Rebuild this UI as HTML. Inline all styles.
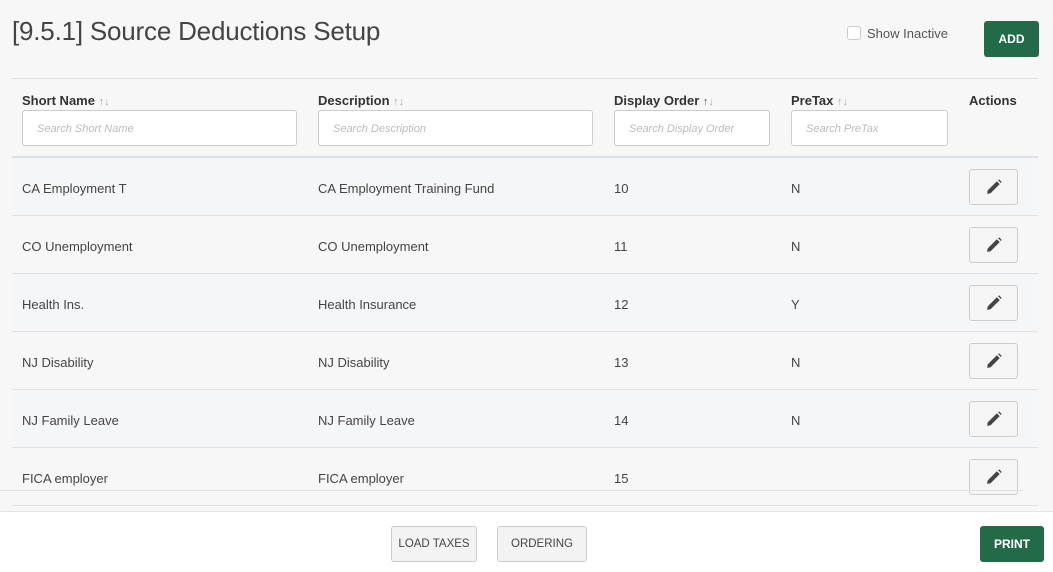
<!DOCTYPE html>
<html><head><meta charset="utf-8"><style>
*{box-sizing:border-box;margin:0;padding:0}
body{width:1053px;height:572px;overflow:hidden;background:#f7f7f7;font-family:"Liberation Sans",sans-serif;color:#333;position:relative}
.abs{position:absolute}
h1{position:absolute;left:12px;top:16px;font-size:26px;font-weight:normal;color:#444;letter-spacing:-0.2px}
.btn-g{position:absolute;background:#236b48;color:#fff;font-weight:bold;font-size:12px;border-radius:3px;display:flex;align-items:center;justify-content:center}
.btn-l{position:absolute;background:#f3f3f3;border:1px solid #ccc;border-radius:3px;color:#444;font-size:11.5px;display:flex;align-items:center;justify-content:center}
.th{position:absolute;top:93px;font-size:13px;font-weight:bold;color:#333}
.th span{color:#aaa;font-weight:normal;font-size:11px}
.in{position:absolute;top:110px;height:36px;background:#fff;border:1px solid #ccc;border-radius:3px;font-size:11px;font-style:italic;color:#bbb;padding:12px 0 0 14px}
.row{position:absolute;left:12px;width:1026px;height:58px;border-bottom:1px solid #dfe1e6}
.c{position:absolute;top:23px;font-size:13px;color:#444}
.ed{position:absolute;left:957px;top:11px;width:49px;height:36px;border:1px solid #ccc;border-radius:3px;background:#f5f5f5;display:flex;align-items:center;justify-content:center}
</style></head><body>
<h1>[9.5.1] Source Deductions Setup</h1>
<div class="abs" style="left:847px;top:26px;width:14px;height:14px;border:1px solid #ccc;border-radius:3px;background:#fff"></div>
<div class="abs" style="left:867px;top:26px;font-size:13px;color:#555">Show Inactive</div>
<div class="btn-g" style="left:984px;top:21px;width:55px;height:36px">ADD</div>
<div class="abs" style="left:12px;top:78px;width:1026px;height:1px;background:#dde0e4"></div>
<div class="th" style="left:22px">Short Name <span>↑↓</span></div>
<div class="th" style="left:318px">Description <span>↑↓</span></div>
<div class="th" style="left:614px">Display Order <span style="color:#555">↑</span><span>↓</span></div>
<div class="th" style="left:791px">PreTax <span>↑↓</span></div>
<div class="th" style="left:969px">Actions</div>
<div class="in" style="left:22px;width:275px">Search Short Name</div>
<div class="in" style="left:318px;width:275px">Search Description</div>
<div class="in" style="left:614px;width:156px">Search Display Order</div>
<div class="in" style="left:791px;width:157px">Search PreTax</div>
<div class="abs" style="left:12px;top:156px;width:1026px;height:2px;background:#dde0e4"></div>

<div class="row" style="top:158px;background:#f5f6f8"><div class="c" style="left:10px">CA Employment T</div><div class="c" style="left:306px">CA Employment Training Fund</div><div class="c" style="left:602px">10</div><div class="c" style="left:779px">N</div><div class="ed"><svg width="16" height="16" viewBox="0 0 14 14"><path d="M1 13 L1.5 10 L9.5 2 L12 4.5 L4 12.5 Z M10.5 1 L11.5 0.3 L13.7 2.5 L13 3.5 Z" fill="#444"/></svg></div></div>
<div class="row" style="top:216px"><div class="c" style="left:10px">CO Unemployment</div><div class="c" style="left:306px">CO Unemployment</div><div class="c" style="left:602px">11</div><div class="c" style="left:779px">N</div><div class="ed"><svg width="16" height="16" viewBox="0 0 14 14"><path d="M1 13 L1.5 10 L9.5 2 L12 4.5 L4 12.5 Z M10.5 1 L11.5 0.3 L13.7 2.5 L13 3.5 Z" fill="#444"/></svg></div></div>
<div class="row" style="top:274px;background:#f5f6f8"><div class="c" style="left:10px">Health Ins.</div><div class="c" style="left:306px">Health Insurance</div><div class="c" style="left:602px">12</div><div class="c" style="left:779px">Y</div><div class="ed"><svg width="16" height="16" viewBox="0 0 14 14"><path d="M1 13 L1.5 10 L9.5 2 L12 4.5 L4 12.5 Z M10.5 1 L11.5 0.3 L13.7 2.5 L13 3.5 Z" fill="#444"/></svg></div></div>
<div class="row" style="top:332px"><div class="c" style="left:10px">NJ Disability</div><div class="c" style="left:306px">NJ Disability</div><div class="c" style="left:602px">13</div><div class="c" style="left:779px">N</div><div class="ed"><svg width="16" height="16" viewBox="0 0 14 14"><path d="M1 13 L1.5 10 L9.5 2 L12 4.5 L4 12.5 Z M10.5 1 L11.5 0.3 L13.7 2.5 L13 3.5 Z" fill="#444"/></svg></div></div>
<div class="row" style="top:390px;background:#f5f6f8"><div class="c" style="left:10px">NJ Family Leave</div><div class="c" style="left:306px">NJ Family Leave</div><div class="c" style="left:602px">14</div><div class="c" style="left:779px">N</div><div class="ed"><svg width="16" height="16" viewBox="0 0 14 14"><path d="M1 13 L1.5 10 L9.5 2 L12 4.5 L4 12.5 Z M10.5 1 L11.5 0.3 L13.7 2.5 L13 3.5 Z" fill="#444"/></svg></div></div>
<div class="row" style="top:448px"><div class="c" style="left:10px">FICA employer</div><div class="c" style="left:306px">FICA employer</div><div class="c" style="left:602px">15</div><div class="ed"><svg width="16" height="16" viewBox="0 0 14 14"><path d="M1 13 L1.5 10 L9.5 2 L12 4.5 L4 12.5 Z M10.5 1 L11.5 0.3 L13.7 2.5 L13 3.5 Z" fill="#444"/></svg></div></div>
<div class="abs" style="left:0;top:490px;width:1023px;height:1px;background:#dde0e4"></div>

<div class="abs" style="left:0;top:511px;width:1053px;height:61px;background:#fff;border-top:1px solid #e3e3e3"></div>
<div class="btn-l" style="left:391px;top:526px;width:86px;height:36px">LOAD TAXES</div>
<div class="btn-l" style="left:497px;top:526px;width:90px;height:36px">ORDERING</div>
<div class="btn-g" style="left:980px;top:526px;width:64px;height:36px">PRINT</div>
</body></html>
